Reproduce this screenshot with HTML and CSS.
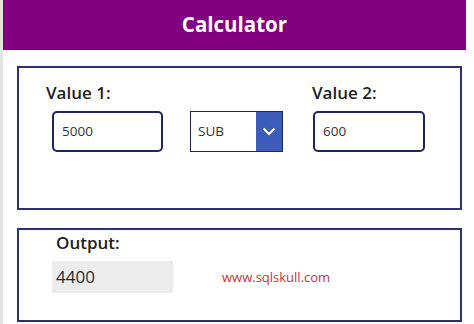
FILE: index.html
```html
<!DOCTYPE html>
<html lang="en">
<head>
    <meta charset="UTF-8">
    <title>Calculator</title>
    <link rel="stylesheet" href="styles.css">
</head>
<body>
    <div class="screen">
        <div class="header">Calculator</div>

        <div class="panel inputs">
            <span class="label label-1">Value 1:</span>
            <span></span>
            <span class="label label-2">Value 2:</span>

            <div class="textbox">5000</div>
            <div class="dropdown">
                <span class="dropdown-value">SUB</span>
                <span class="dropdown-btn">
                    <svg width="14" height="9" viewBox="0 0 14 9">
                        <path d="M1.5 1.5 L7 7 L12.5 1.5" fill="none" stroke="#fff" stroke-width="2"/>
                    </svg>
                </span>
            </div>
            <div class="textbox textbox-2">600</div>
        </div>

        <div class="panel result">
            <span class="label">Output:</span>
            <div class="result-row">
                <div class="output">4400</div>
                <span class="site">www.sqlskull.com</span>
            </div>
        </div>
    </div>
</body>
</html>
```

FILE: styles.css
```css
body {
    margin: 0;
    background: #fff;
    font-family: 'Open Sans', sans-serif;
    color: #222;
}

.screen {
    width: 463px;
    height: 324px;
    border-left: 3px solid #e4e4e4;
}

.header {
    height: 50px;
    background: #820080;
    color: #fff;
    font-size: 20.5px;
    font-weight: 700;
    line-height: 48px;
    text-align: center;
}

.panel {
    margin: 16px 0 0 14px;
    width: 445px;
    border: 2px solid #2e3170;
}

.inputs {
    display: grid;
    grid-template-columns: 111px 120px 142px;
    grid-template-rows: 20px 41px;
    row-gap: 8px;
    padding: 15px 0 0 33px;
    box-sizing: border-box;
    height: 144px;
}

.label {
    font-size: 17px;
    font-weight: 600;
    line-height: 20px;
    color: #1e1e1e;
}

.label-1 {
    margin-left: -6px;
}

.label-2 {
    margin-left: 29px;
}

.textbox {
    border: 2px solid #1f2463;
    border-radius: 5px;
    padding-left: 8px;
    font-size: 13.5px;
    line-height: 37px;
    color: #333;
}

.textbox-2 {
    margin-left: 30px;
}

.dropdown {
    margin-left: 27px;
    display: flex;
    border: 1px solid #1f2463;
}

.dropdown-value {
    flex: 1;
    padding-left: 7px;
    font-size: 13.5px;
    line-height: 39px;
    color: #333;
}

.dropdown-btn {
    width: 26px;
    background: #3b5cb8;
    display: flex;
    align-items: center;
    justify-content: center;
}

.result {
    margin-top: 18px;
    height: 94px;
    box-sizing: border-box;
    padding: 3px 0 0 33px;
}

.result .label {
    display: block;
    margin-left: 4px;
}

.result-row {
    display: flex;
    align-items: center;
    margin-top: 8px;
}

.output {
    width: 117px;
    height: 32px;
    padding-left: 4px;
    background: #ececec;
    font-size: 17px;
    line-height: 32px;
    color: #2a2a2a;
}

.site {
    margin-left: 49px;
    font-size: 13px;
    color: #c9303b;
}
```
